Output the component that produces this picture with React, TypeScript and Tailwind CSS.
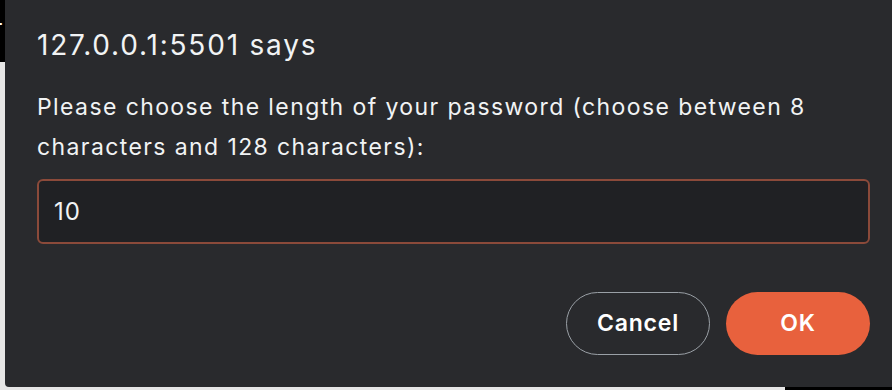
import React from "react";

export default function App() {
  return (
    <div
      className="relative w-[892px] h-[390px] overflow-hidden bg-[#e6e6e6]"
      style={{ fontFamily: "Inter, 'Noto Sans', 'Liberation Sans', sans-serif" }}
    >
      {/* page behind the dialog */}
      <div className="absolute left-0 top-0 w-[40px] h-[62px] bg-black text-white text-[22px] leading-none pt-[16px]">
        <span className="-ml-[6px]">r</span>
      </div>
      <div className="absolute right-0 bottom-0 w-[107px] h-[10px] bg-black" />

      {/* dialog */}
      <div className="absolute left-[5px] top-0 right-0 h-[387px] rounded-bl-[4px] bg-[#292a2d] text-white flex flex-col pl-[32px] pr-[22px]">
        <div className="mt-[28px] text-[28px] leading-[34px] tracking-[1.8px] text-[#f1f3f4]">127.0.0.1:5501 says</div>
        <div className="mt-[25px] text-[23px] leading-[40px] tracking-[1.4px] text-[#f1f3f4]">
          Please choose the length of your password (choose between 8 characters and 128 characters):
        </div>
        <div className="mt-[12px] h-[65px] rounded-[6px] border-2 border-[#8b4a3a] bg-[#202124] flex items-center pl-[15px] text-[24px] tracking-[1px] text-[#f1f3f4]">
          10
        </div>
        <div className="mt-[48px] flex justify-end gap-[16px]">
          <button className="w-[144px] h-[63px] rounded-full border border-[#9aa0a6] text-[23px] font-semibold tracking-[0.8px] text-white">
            Cancel
          </button>
          <button className="w-[144px] h-[63px] rounded-full bg-[#e8613d] text-[23px] font-semibold tracking-[0.8px] text-white">
            OK
          </button>
        </div>
      </div>
    </div>
  );
}
